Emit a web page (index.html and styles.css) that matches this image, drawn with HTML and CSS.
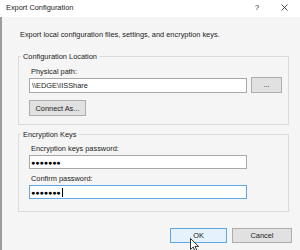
FILE: index.html
```html
<!DOCTYPE html>
<html>
<head>
<meta charset="utf-8">
<link rel="stylesheet" href="styles.css">
</head>
<body>
<div class="window">
  <div class="titlebar">
    <span class="title">Export Configuration</span>
    <span class="help">?</span>
    <span class="close"><svg width="7" height="7" viewBox="0 0 7 7"><path d="M0.5 0.5L6.5 6.5M6.5 0.5L0.5 6.5" stroke="#222" stroke-width="0.8" fill="none"/></svg></span>
  </div>
  <div class="content">
    <p class="desc">Export local configuration files, settings, and encryption keys.</p>
    <fieldset class="group group-loc">
      <legend>Configuration Location</legend>
      <div class="label">Physical path:</div>
      <div class="row">
        <div class="input input-path">\\EDGE\IISShare</div>
        <div class="btn btn-browse">...</div>
      </div>
      <div class="btn btn-connect">Connect As...</div>
    </fieldset>
    <fieldset class="group group-keys">
      <legend>Encryption Keys</legend>
      <div class="label">Encryption keys password:</div>
      <div class="input input-pass">&#9679;&#9679;&#9679;&#9679;&#9679;&#9679;&#9679;</div>
      <div class="label label-confirm">Confirm password:</div>
      <div class="input input-pass focused">&#9679;&#9679;&#9679;&#9679;&#9679;&#9679;&#9679;<span class="caret"></span></div>
    </fieldset>
    <div class="footer">
      <div class="btn btn-ok">OK</div>
      <div class="btn btn-cancel">Cancel</div>
    </div>
  </div>
  <svg class="cursor" width="12" height="14" viewBox="0 0 12 14"><path d="M0.5 0.5L0.5 11.5L3.2 9L5 13.2L6.8 12.4L5 8.4L8.6 8.4Z" fill="#fff" stroke="#000" stroke-width="0.8" stroke-linejoin="round"/></svg>
</div>
</body>
</html>
```

FILE: styles.css
```css
* { box-sizing: border-box; }
html, body { margin: 0; padding: 0; }
body {
  width: 300px;
  height: 250px;
  overflow: hidden;
  font-family: "Liberation Sans", Arial, sans-serif;
  font-size: 7.4px;
  line-height: 9px;
  color: #1a1a1a;
  background: #f5f5f5;
}
.window {
  position: relative;
  width: 300px;
  height: 250px;
  display: flex;
  flex-direction: column;
}
.titlebar {
  height: 17px;
  background: #fff;
  display: flex;
  align-items: center;
  padding-left: 6px;
  flex: none;
}
.title { flex: 1; margin-top: -3px; }
.help { width: 8px; margin-right: 18px; color: #222; margin-top: -2px; }
.close { width: 7px; margin-right: 12px; display: flex; margin-top: -3px; }
.content {
  flex: 1;
  border-left: 2px solid #9c9c9c;
  padding: 13px 11px 0 16px;
  display: flex;
  flex-direction: column;
}
.desc { margin: 0 0 0 2px; height: 9px; }
.group {
  margin: 13px 0 0 0;
  border: 1px solid #dcdcdc;
  padding: 6px 6px 8px 10px;
  min-width: 0;
}
.group legend {
  padding: 0 2px;
  margin-left: -8px;
  line-height: 9px;
}
.group-keys { margin-top: 5px; padding-top: 5px; padding-bottom: 12px; }
.label { height: 9px; margin-left: 2px; }
.row {
  display: flex;
  align-items: center;
  margin-top: 2px;
  gap: 4px;
}
.input {
  background: #fff;
  border: 1px solid #a8a8a8;
  height: 15px;
  padding: 0 0 0 2px;
  display: flex;
  align-items: center;
  width: 218px;
}
.input-path { flex: none; }
.input-pass {
  height: 14px;
  margin-top: 2px;
  font-size: 7px;
  letter-spacing: 0;
  padding-left: 1px;
  color: #000;
}
.label-confirm { margin-top: 5px; }
.focused { border-color: #5ea8e6; }
.caret { width: 1px; height: 9px; background: #000; margin-left: 1px; }
.btn {
  background: #e1e1e1;
  border: 1px solid #adadad;
  display: flex;
  align-items: center;
  justify-content: center;
  height: 16px;
}
.btn-browse { width: 31px; margin-top: -2px; }
.btn-connect { width: 57px; margin-top: 7px; }
.footer {
  display: flex;
  justify-content: flex-end;
  gap: 5px;
  margin-top: 16px;
  margin-right: -3px;
}
.btn-ok { width: 57px; background: #e5f1fb; border-color: #5ea8e6; height: 15px; }
.btn-cancel { width: 60px; height: 15px; }
.cursor { position: absolute; left: 190px; top: 238px; }
```
